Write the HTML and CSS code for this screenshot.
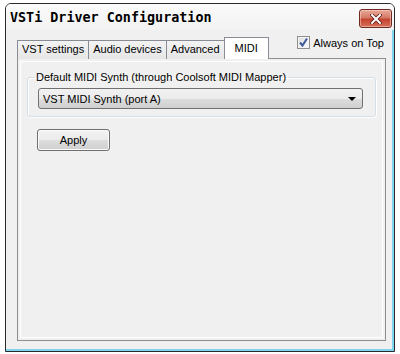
FILE: index.html
```html
<!DOCTYPE html>
<html lang="en">
<head>
    <meta charset="UTF-8">
    <title>VSTi Driver Configuration</title>
    <link rel="stylesheet" href="styles.css">
</head>
<body>
    <div class="window">
        <!-- Title bar -->
        <div class="titlebar">
            <span class="title">VSTi Driver Configuration</span>
            <button class="close-btn">
                <svg width="12" height="10" viewBox="0 0 12 10">
                    <path d="M2 1 L10 9 M10 1 L2 9" stroke="#5a1a12" stroke-width="3.6" stroke-linecap="square"/>
                    <path d="M2 1 L10 9 M10 1 L2 9" stroke="#ffffff" stroke-width="2" stroke-linecap="square"/>
                </svg>
            </button>
        </div>

        <div class="client">
            <div class="tab-row">
                <div class="tab">VST settings</div>
                <div class="tab">Audio devices</div>
                <div class="tab">Advanced</div>
                <div class="tab selected">MIDI</div>
                <label class="check">
                    <span class="check-box">
                        <svg width="11" height="11" viewBox="0 0 11 11">
                            <path d="M2 5.5 L4.5 8.5 L9 1.5" fill="none" stroke="#3d5a9e" stroke-width="2"/>
                        </svg>
                    </span>
                    Always on Top
                </label>
            </div>

            <!-- MIDI tab -->
            <div class="panel">
                <fieldset class="group">
                    <legend>Default MIDI Synth (through Coolsoft MIDI Mapper)</legend>
                    <div class="combo">
                        <span>VST MIDI Synth (port A)</span>
                        <span class="arrow"></span>
                    </div>
                </fieldset>
                <button class="apply-btn">Apply</button>
            </div>
        </div>
    </div>
</body>
</html>
```

FILE: styles.css
```css
* {
    margin: 0;
    padding: 0;
    box-sizing: border-box;
}

body {
    font-family: 'Liberation Sans', Arial, sans-serif;
    font-size: 11px;
    color: #000;
    background-color: #ffffff;
}

.window {
    margin: 3px 0 0 5px;
    width: 390px;
    height: 349px;
    border: 1px solid #2a2a2a;
    border-radius: 6px 6px 0 0;
    background-color: #f0f0f0;
    box-shadow: inset -2px -2px 0 #7fd4ee;
    display: flex;
    flex-direction: column;
    overflow: hidden;
}

.titlebar {
    height: 26px;
    display: flex;
    align-items: center;
    justify-content: space-between;
    padding: 0 2px 0 4px;
    background: linear-gradient(#fbfbfb, #f2f2f2);
}

.title {
    font-family: 'DejaVu Sans Mono', monospace;
    font-weight: bold;
    font-size: 13.4px;
    margin-top: 1px;
}

.close-btn {
    width: 33px;
    height: 19px;
    margin-top: 3px;
    border: 1px solid #6e2a22;
    border-radius: 3px;
    background: linear-gradient(#e9a998 0%, #d47a68 45%, #c4442f 55%, #d5705a 100%);
    box-shadow: inset 0 0 0 1px rgba(255, 220, 210, 0.5);
    display: flex;
    align-items: center;
    justify-content: center;
}

.client {
    flex: 1;
    display: flex;
    flex-direction: column;
    padding: 7px 8px 10px 11px;
}

.tab-row {
    display: flex;
    align-items: flex-end;
    height: 22px;
    margin-bottom: -1px;
    position: relative;
    z-index: 1;
}

.tab {
    height: 19px;
    padding: 2px 4px 0;
    border: 1px solid #898c95;
    border-bottom: none;
    margin-right: -1px;
    background: linear-gradient(#f3f3f3, #e6e6e6);
    white-space: nowrap;
}

.tab.selected {
    height: 22px;
    padding: 4px 10px 0;
    background: #ffffff;
}

.check {
    margin-left: auto;
    margin-right: 2px;
    align-self: flex-start;
    display: flex;
    align-items: center;
    gap: 3px;
    margin-top: -1px;
}

.check-box {
    width: 13px;
    height: 13px;
    border: 1px solid #8e8f8f;
    background: linear-gradient(135deg, #dcdcdc, #fdfdfd);
    box-shadow: inset 0 0 0 1px #f4f4f4;
    display: flex;
    align-items: center;
    justify-content: center;
}

.panel {
    flex: 1;
    border: 1px solid #8e8e8e;
    box-shadow: inset 0 0 0 2px #f0f0f0, inset 0 0 0 3px #ffffff;
    padding: 12px 5px 0 9px;
    display: flex;
    flex-direction: column;
    align-items: flex-start;
}

.group {
    width: 349px;
    border: 1px solid #d5dfe5;
    border-radius: 3px;
    box-shadow: 1px 1px 0 #ffffff, inset 1px 1px 0 #ffffff;
    padding: 5px 12px 7px 10px;
}

.group legend {
    padding: 0 2px;
    margin-left: -4px;
}

.combo {
    height: 21px;
    border: 1px solid #707070;
    border-radius: 3px;
    background: linear-gradient(#f2f2f2 0%, #ebebeb 50%, #dddddd 51%, #cfcfcf 100%);
    display: flex;
    align-items: center;
    justify-content: space-between;
    padding: 0 6px 0 4px;
}

.arrow {
    width: 0;
    height: 0;
    border-left: 4px solid transparent;
    border-right: 4px solid transparent;
    border-top: 4px solid #000;
}

.apply-btn {
    margin: 12px 0 0 10px;
    width: 73px;
    height: 22px;
    font-family: inherit;
    font-size: 11px;
    border: 1px solid #707070;
    border-radius: 3px;
    background: linear-gradient(#f2f2f2 0%, #ebebeb 50%, #dddddd 51%, #cfcfcf 100%);
    box-shadow: inset 0 0 0 1px #fcfcfc;
}
```
